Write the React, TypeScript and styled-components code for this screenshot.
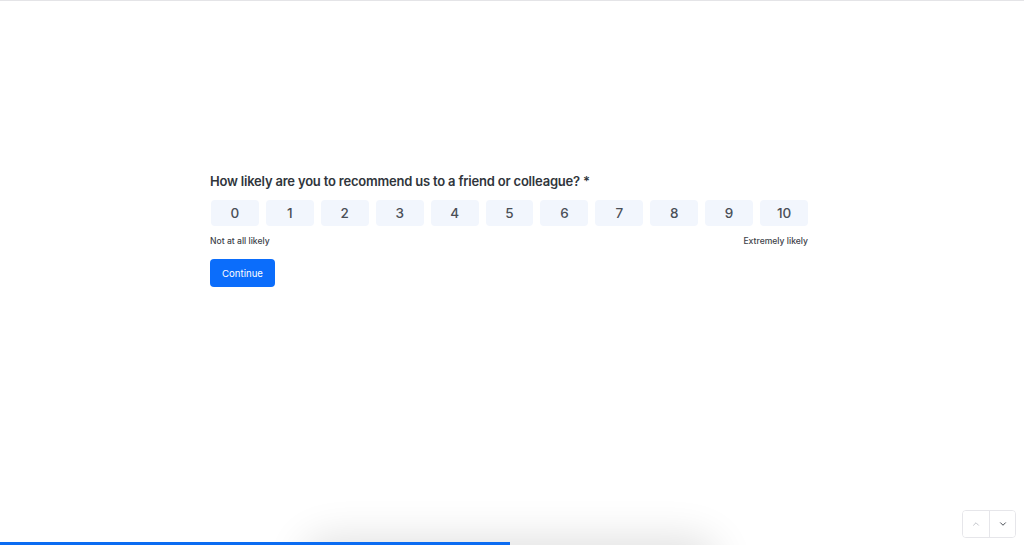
import styled, { createGlobalStyle } from "styled-components";

const GlobalStyle = createGlobalStyle`
  html, body {
    margin: 0;
    padding: 0;
    background: #ffffff;
    font-family: Inter, "Liberation Sans", sans-serif;
  }
`;

const scores = [0, 1, 2, 3, 4, 5, 6, 7, 8, 9, 10];

const Page = styled.div`
  position: relative;
  height: 545px;
  box-sizing: border-box;
  border-top: 1px solid #e4e4e7;
  overflow: hidden;
  display: flex;
  justify-content: center;
`;

const Question = styled.div`
  width: 598px;
  margin-left: -6px;
  padding-top: 172px;
  display: flex;
  flex-direction: column;
`;

const Title = styled.h2`
  margin: 0 0 10px;
  font-size: 13px;
  line-height: 17px;
  font-weight: 600;
  letter-spacing: -0.2px;
  color: #30353b;
`;

const Scale = styled.div`
  display: grid;
  grid-template-columns: repeat(11, 1fr);
  gap: 7px;
  padding-left: 1px;
`;

const Score = styled.button`
  height: 26px;
  border: none;
  border-radius: 4px;
  background: #f2f6fd;
  color: #4a4f57;
  font-family: Inter, "Liberation Sans", sans-serif;
  font-size: 13.5px;
  font-weight: 500;
  padding: 0;
  cursor: pointer;
`;

const Labels = styled.div`
  display: flex;
  justify-content: space-between;
  margin-top: 9px;
  font-size: 8.6px;
  line-height: 12px;
  font-weight: 500;
  color: #3d4249;
`;

const ContinueButton = styled.button`
  align-self: flex-start;
  margin-top: 12px;
  width: 65px;
  height: 28px;
  border: none;
  border-radius: 4px;
  background: #0b6dfb;
  color: #ffffff;
  font-family: Inter, "Liberation Sans", sans-serif;
  font-size: 9.6px;
  font-weight: 400;
  cursor: pointer;
`;

const Nav = styled.div`
  position: absolute;
  right: 8px;
  bottom: 7px;
  display: flex;
  border: 1px solid #e6e6ea;
  border-radius: 4px;
  background: #ffffff;
  overflow: hidden;
`;

const NavButton = styled.button<{ $disabled?: boolean }>`
  width: 26px;
  height: 26px;
  border: none;
  padding: 0;
  background: #ffffff;
  display: flex;
  align-items: center;
  justify-content: center;
  color: ${(p) => (p.$disabled ? "#c4c6cc" : "#4a4f57")};
  & + & {
    border-left: 1px solid #e6e6ea;
  }
`;

const Shadow = styled.div`
  position: absolute;
  left: 310px;
  width: 400px;
  bottom: -40px;
  height: 40px;
  border-radius: 20px;
  box-shadow: 0 0 40px 8px rgba(0, 0, 0, 0.12);
`;

const Progress = styled.div`
  position: absolute;
  left: 0;
  right: 0;
  bottom: 0;
  height: 3px;
`;

const ProgressFill = styled.div`
  height: 100%;
  background: #0b6cf2;
`;

const Chevron = ({ up }: { up?: boolean }) => (
  <svg width="10" height="10" viewBox="0 0 24 24" fill="none" stroke="currentColor" strokeWidth="2.4" strokeLinecap="round" strokeLinejoin="round">
    <path d={up ? "M6 15l6-6 6 6" : "M6 9l6 6 6-6"} />
  </svg>
);

export default function App() {
  const progress = 510 / 1024;
  return (
    <>
      <GlobalStyle />
      <Page>
        <Question>
          <Title>How likely are you to recommend us to a friend or colleague? *</Title>
          <Scale>
            {scores.map((s) => (
              <Score key={s}>{s}</Score>
            ))}
          </Scale>
          <Labels>
            <span>Not at all likely</span>
            <span>Extremely likely</span>
          </Labels>
          <ContinueButton>Continue</ContinueButton>
        </Question>
        <Shadow />
        <Progress>
          <ProgressFill style={{ width: `${progress * 100}%` }} />
        </Progress>
        <Nav>
          <NavButton $disabled>
            <Chevron up />
          </NavButton>
          <NavButton>
            <Chevron />
          </NavButton>
        </Nav>
      </Page>
    </>
  );
}
